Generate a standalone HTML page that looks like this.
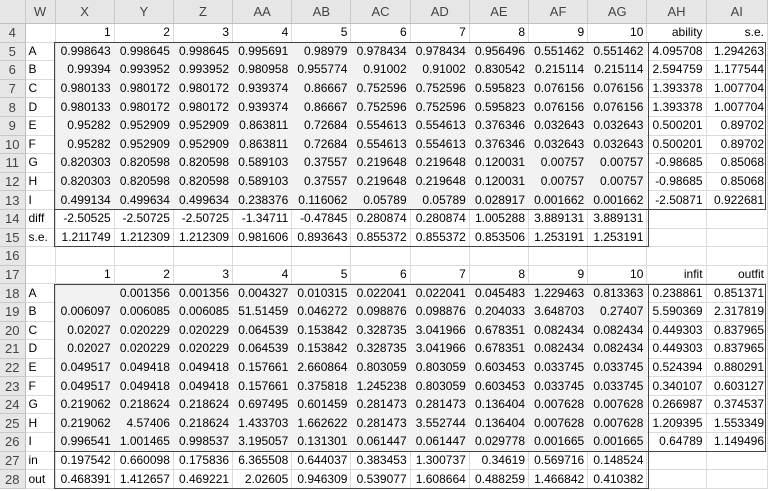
<!DOCTYPE html>
<html><head><meta charset="utf-8"><style>
*{margin:0;padding:0;box-sizing:border-box}
body{width:768px;height:491px;overflow:hidden;background:#fff;font-family:"Liberation Sans",Arial,sans-serif;font-size:12px;color:#000;position:relative}
table{border-collapse:collapse;table-layout:fixed;width:768px;position:absolute;left:0;top:0}
td{border-right:1px solid #dadada;border-bottom:1px solid #dadada;text-align:right;padding:0 3px;white-space:nowrap;overflow:hidden;height:18.6px;line-height:17px}
tr.h td{height:23.5px;background:#e6e6e6;color:#444;text-align:center;border-right:1px solid #c8c8c8;border-bottom:1px solid #bdbdbd;font-size:13px}
td.r{background:#e6e6e6;color:#444;text-align:center;border-right:1px solid #bdbdbd;border-bottom:1px solid #c8c8c8;padding:0;font-size:13px}
td.l{text-align:left}
td.g{background:#f2f2f2;border-color:#f2f2f2}
.b{position:absolute;border:1px solid #444;pointer-events:none}
</style></head><body>
<table>
<colgroup><col style="width:25px"><col style="width:30px"><col span="11" style="width:59.2px"><col></colgroup>
<tr class="h"><td style="background:#e6e6e6"></td><td>W</td><td>X</td><td>Y</td><td>Z</td><td>AA</td><td>AB</td><td>AC</td><td>AD</td><td>AE</td><td>AF</td><td>AG</td><td>AH</td><td>AI</td></tr>
<tr><td class="r">4</td><td></td><td>1</td><td>2</td><td>3</td><td>4</td><td>5</td><td>6</td><td>7</td><td>8</td><td>9</td><td>10</td><td>ability</td><td>s.e.</td></tr>
<tr><td class="r">5</td><td class="l">A</td><td class="g">0.998643</td><td class="g">0.998645</td><td class="g">0.998645</td><td class="g">0.995691</td><td class="g">0.98979</td><td class="g">0.978434</td><td class="g">0.978434</td><td class="g">0.956496</td><td class="g">0.551462</td><td class="g">0.551462</td><td>4.095708</td><td>1.294263</td></tr>
<tr><td class="r">6</td><td class="l">B</td><td class="g">0.99394</td><td class="g">0.993952</td><td class="g">0.993952</td><td class="g">0.980958</td><td class="g">0.955774</td><td class="g">0.91002</td><td class="g">0.91002</td><td class="g">0.830542</td><td class="g">0.215114</td><td class="g">0.215114</td><td>2.594759</td><td>1.177544</td></tr>
<tr><td class="r">7</td><td class="l">C</td><td class="g">0.980133</td><td class="g">0.980172</td><td class="g">0.980172</td><td class="g">0.939374</td><td class="g">0.86667</td><td class="g">0.752596</td><td class="g">0.752596</td><td class="g">0.595823</td><td class="g">0.076156</td><td class="g">0.076156</td><td>1.393378</td><td>1.007704</td></tr>
<tr><td class="r">8</td><td class="l">D</td><td class="g">0.980133</td><td class="g">0.980172</td><td class="g">0.980172</td><td class="g">0.939374</td><td class="g">0.86667</td><td class="g">0.752596</td><td class="g">0.752596</td><td class="g">0.595823</td><td class="g">0.076156</td><td class="g">0.076156</td><td>1.393378</td><td>1.007704</td></tr>
<tr><td class="r">9</td><td class="l">E</td><td class="g">0.95282</td><td class="g">0.952909</td><td class="g">0.952909</td><td class="g">0.863811</td><td class="g">0.72684</td><td class="g">0.554613</td><td class="g">0.554613</td><td class="g">0.376346</td><td class="g">0.032643</td><td class="g">0.032643</td><td>0.500201</td><td>0.89702</td></tr>
<tr><td class="r">10</td><td class="l">F</td><td class="g">0.95282</td><td class="g">0.952909</td><td class="g">0.952909</td><td class="g">0.863811</td><td class="g">0.72684</td><td class="g">0.554613</td><td class="g">0.554613</td><td class="g">0.376346</td><td class="g">0.032643</td><td class="g">0.032643</td><td>0.500201</td><td>0.89702</td></tr>
<tr><td class="r">11</td><td class="l">G</td><td class="g">0.820303</td><td class="g">0.820598</td><td class="g">0.820598</td><td class="g">0.589103</td><td class="g">0.37557</td><td class="g">0.219648</td><td class="g">0.219648</td><td class="g">0.120031</td><td class="g">0.00757</td><td class="g">0.00757</td><td>-0.98685</td><td>0.85068</td></tr>
<tr><td class="r">12</td><td class="l">H</td><td class="g">0.820303</td><td class="g">0.820598</td><td class="g">0.820598</td><td class="g">0.589103</td><td class="g">0.37557</td><td class="g">0.219648</td><td class="g">0.219648</td><td class="g">0.120031</td><td class="g">0.00757</td><td class="g">0.00757</td><td>-0.98685</td><td>0.85068</td></tr>
<tr><td class="r">13</td><td class="l">I</td><td class="g">0.499134</td><td class="g">0.499634</td><td class="g">0.499634</td><td class="g">0.238376</td><td class="g">0.116062</td><td class="g">0.05789</td><td class="g">0.05789</td><td class="g">0.028917</td><td class="g">0.001662</td><td class="g">0.001662</td><td>-2.50871</td><td>0.922681</td></tr>
<tr><td class="r">14</td><td class="l">diff</td><td>-2.50525</td><td>-2.50725</td><td>-2.50725</td><td>-1.34711</td><td>-0.47845</td><td>0.280874</td><td>0.280874</td><td>1.005288</td><td>3.889131</td><td>3.889131</td><td></td><td></td></tr>
<tr><td class="r">15</td><td class="l">s.e.</td><td>1.211749</td><td>1.212309</td><td>1.212309</td><td>0.981606</td><td>0.893643</td><td>0.855372</td><td>0.855372</td><td>0.853506</td><td>1.253191</td><td>1.253191</td><td></td><td></td></tr>
<tr><td class="r">16</td><td></td><td></td><td></td><td></td><td></td><td></td><td></td><td></td><td></td><td></td><td></td><td></td><td></td></tr>
<tr><td class="r">17</td><td></td><td>1</td><td>2</td><td>3</td><td>4</td><td>5</td><td>6</td><td>7</td><td>8</td><td>9</td><td>10</td><td>infit</td><td>outfit</td></tr>
<tr><td class="r">18</td><td class="l">A</td><td class="g"></td><td class="g">0.001356</td><td class="g">0.001356</td><td class="g">0.004327</td><td class="g">0.010315</td><td class="g">0.022041</td><td class="g">0.022041</td><td class="g">0.045483</td><td class="g">1.229463</td><td class="g">0.813363</td><td>0.238861</td><td>0.851371</td></tr>
<tr><td class="r">19</td><td class="l">B</td><td class="g">0.006097</td><td class="g">0.006085</td><td class="g">0.006085</td><td class="g">51.51459</td><td class="g">0.046272</td><td class="g">0.098876</td><td class="g">0.098876</td><td class="g">0.204033</td><td class="g">3.648703</td><td class="g">0.27407</td><td>5.590369</td><td>2.317819</td></tr>
<tr><td class="r">20</td><td class="l">C</td><td class="g">0.02027</td><td class="g">0.020229</td><td class="g">0.020229</td><td class="g">0.064539</td><td class="g">0.153842</td><td class="g">0.328735</td><td class="g">3.041966</td><td class="g">0.678351</td><td class="g">0.082434</td><td class="g">0.082434</td><td>0.449303</td><td>0.837965</td></tr>
<tr><td class="r">21</td><td class="l">D</td><td class="g">0.02027</td><td class="g">0.020229</td><td class="g">0.020229</td><td class="g">0.064539</td><td class="g">0.153842</td><td class="g">0.328735</td><td class="g">3.041966</td><td class="g">0.678351</td><td class="g">0.082434</td><td class="g">0.082434</td><td>0.449303</td><td>0.837965</td></tr>
<tr><td class="r">22</td><td class="l">E</td><td class="g">0.049517</td><td class="g">0.049418</td><td class="g">0.049418</td><td class="g">0.157661</td><td class="g">2.660864</td><td class="g">0.803059</td><td class="g">0.803059</td><td class="g">0.603453</td><td class="g">0.033745</td><td class="g">0.033745</td><td>0.524394</td><td>0.880291</td></tr>
<tr><td class="r">23</td><td class="l">F</td><td class="g">0.049517</td><td class="g">0.049418</td><td class="g">0.049418</td><td class="g">0.157661</td><td class="g">0.375818</td><td class="g">1.245238</td><td class="g">0.803059</td><td class="g">0.603453</td><td class="g">0.033745</td><td class="g">0.033745</td><td>0.340107</td><td>0.603127</td></tr>
<tr><td class="r">24</td><td class="l">G</td><td class="g">0.219062</td><td class="g">0.218624</td><td class="g">0.218624</td><td class="g">0.697495</td><td class="g">0.601459</td><td class="g">0.281473</td><td class="g">0.281473</td><td class="g">0.136404</td><td class="g">0.007628</td><td class="g">0.007628</td><td>0.266987</td><td>0.374537</td></tr>
<tr><td class="r">25</td><td class="l">H</td><td class="g">0.219062</td><td class="g">4.57406</td><td class="g">0.218624</td><td class="g">1.433703</td><td class="g">1.662622</td><td class="g">0.281473</td><td class="g">3.552744</td><td class="g">0.136404</td><td class="g">0.007628</td><td class="g">0.007628</td><td>1.209395</td><td>1.553349</td></tr>
<tr><td class="r">26</td><td class="l">I</td><td class="g">0.996541</td><td class="g">1.001465</td><td class="g">0.998537</td><td class="g">3.195057</td><td class="g">0.131301</td><td class="g">0.061447</td><td class="g">0.061447</td><td class="g">0.029778</td><td class="g">0.001665</td><td class="g">0.001665</td><td>0.64789</td><td>1.149496</td></tr>
<tr><td class="r">27</td><td class="l">in</td><td>0.197542</td><td>0.660098</td><td>0.175836</td><td>6.365508</td><td>0.644037</td><td>0.383453</td><td>1.300737</td><td>0.34619</td><td>0.569716</td><td>0.148524</td><td></td><td></td></tr>
<tr><td class="r">28</td><td class="l">out</td><td>0.468391</td><td>1.412657</td><td>0.469221</td><td>2.02605</td><td>0.946309</td><td>0.539077</td><td>1.608664</td><td>0.488259</td><td>1.466842</td><td>0.410382</td><td></td><td></td></tr>
</table>
<div class="b" style="left:54px;top:42px;width:595px;height:168px"></div>
<div class="b" style="left:648px;top:42px;width:118px;height:168px"></div>
<div class="b" style="left:54px;top:209px;width:595px;height:38px"></div>
<div class="b" style="left:54px;top:284px;width:595px;height:168px"></div>
<div class="b" style="left:648px;top:284px;width:118px;height:168px"></div>
<div class="b" style="left:54px;top:451px;width:595px;height:38px"></div>
</body></html>
